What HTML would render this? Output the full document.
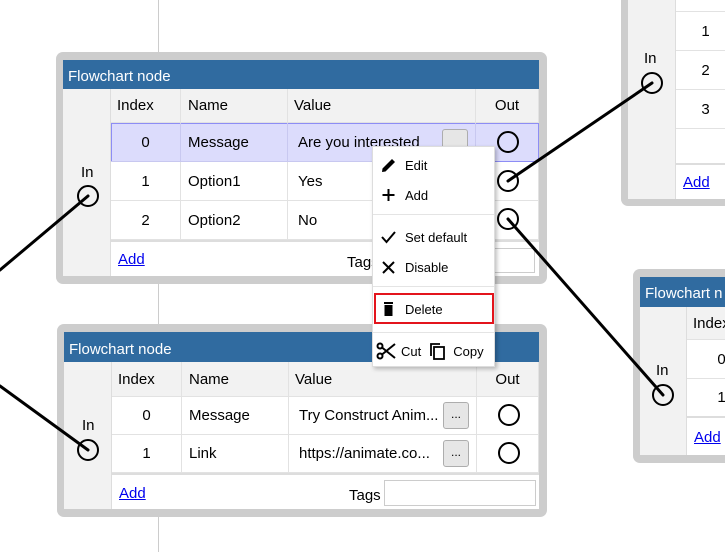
<!DOCTYPE html>
<html><head><meta charset="utf-8"><style>
*{box-sizing:border-box;margin:0;padding:0}
body{width:725px;height:552px;overflow:hidden;background:#fff;position:relative;font-family:"Liberation Sans",sans-serif;font-size:15px;color:#000}
.a{position:absolute}
.frame{position:absolute;background:#cdcdcd;border-radius:7px}
.hdr{position:absolute;background:#306ba0;color:#fff;font-size:15px;line-height:30px;padding-left:5px;white-space:nowrap;overflow:hidden}
.incol{position:absolute;background:#f2f2f2;border-right:1px solid #ddd}
.cell{position:absolute;border-right:1px solid #e2e2e2;border-bottom:1px solid #e2e2e2;display:flex;align-items:center;padding-left:7px;white-space:nowrap;overflow:hidden}
.th{background:#f2f2f2}
.c{justify-content:center;padding-left:0}
.circ{position:absolute;width:22px;height:22px;border:2.5px solid #000;border-radius:50%;background:transparent}
.btn{position:absolute;width:26px;height:27px;border:1px solid #adadad;border-radius:3px;background:#e6e6e6;font-size:12px;text-align:center;line-height:22px}
a{color:#00e;text-decoration:underline}
.mi{position:absolute;left:0;display:flex;align-items:center;font-size:13px}
</style></head><body>
<div class="a" style="left:158px;top:0;width:1px;height:552px;background:#ccc"></div>

<div class="frame" style="left:621px;top:-10px;width:120px;height:216px"></div>
<div class="a" style="left:628px;top:-10px;width:100px;height:209px;background:#fff"></div>
<div class="incol" style="left:628px;top:-10px;width:48px;height:209px"></div>
<div class="a" style="left:644px;top:50px">In</div>
<div class="cell c" style="left:676px;top:-10px;width:60px;height:22px"></div>
<div class="cell c" style="left:676px;top:12px;width:60px;height:39px">1</div>
<div class="cell c" style="left:676px;top:51px;width:60px;height:39px">2</div>
<div class="cell c" style="left:676px;top:90px;width:60px;height:39px">3</div>
<div class="cell" style="left:676px;top:129px;width:60px;height:36px;border-bottom:2px solid #ddd"></div>
<div class="a" style="left:683px;top:174px"><a>Add</a></div>

<div class="frame" style="left:633px;top:269px;width:110px;height:194px"></div>
<div class="hdr" style="left:640px;top:277px;width:90px;height:30px;line-height:33px">Flowchart n</div>
<div class="a" style="left:640px;top:307px;width:90px;height:148px;background:#fff"></div>
<div class="incol" style="left:640px;top:307px;width:47px;height:148px"></div>
<div class="a" style="left:656px;top:362px">In</div>
<div class="cell th" style="left:687px;top:307px;width:50px;height:33px;padding-left:6px">Index</div>
<div class="cell c" style="left:687px;top:340px;width:70px;height:39px">0</div>
<div class="cell c" style="left:687px;top:379px;width:70px;height:38px">1</div>
<div class="a" style="left:687px;top:416px;width:50px;height:2px;background:#ddd"></div>
<div class="a" style="left:694px;top:429px"><a>Add</a></div>

<div class="frame" style="left:56px;top:52px;width:491px;height:232px"></div>
<div class="hdr" style="left:63px;top:60px;width:476px;height:29px;line-height:33px">Flowchart node</div>
<div class="a" style="left:63px;top:89px;width:476px;height:187px;background:#fff"></div>
<div class="incol" style="left:63px;top:89px;width:48px;height:187px"></div>
<div class="a" style="left:81px;top:164px">In</div>
<div class="cell th" style="left:111px;top:89px;width:70px;height:34px;padding-left:6px">Index</div>
<div class="cell th" style="left:181px;top:89px;width:107px;height:34px">Name</div>
<div class="cell th" style="left:288px;top:89px;width:188px;height:34px;padding-left:6px">Value</div>
<div class="cell th c" style="left:476px;top:89px;width:63px;height:34px">Out</div>
<div class="a" style="left:111px;top:123px;width:428px;height:39px;background:#dcdcfc;border:1px solid #8d8df5"></div>
<div class="cell c" style="left:111px;top:123px;width:70px;height:39px;border-color:#c8c8f0">0</div>
<div class="cell" style="left:181px;top:123px;width:107px;height:39px;border-color:#c8c8f0">Message</div>
<div class="cell" style="left:288px;top:123px;width:188px;height:39px;padding-left:10px;border-color:#c8c8f0">Are you interested</div>
<div class="btn" style="left:442px;top:129px"></div>
<div class="cell c" style="left:111px;top:162px;width:70px;height:39px">1</div>
<div class="cell" style="left:181px;top:162px;width:107px;height:39px">Option1</div>
<div class="cell" style="left:288px;top:162px;width:188px;height:39px;padding-left:10px">Yes</div>
<div class="cell" style="left:476px;top:162px;width:63px;height:39px"></div>
<div class="cell c" style="left:111px;top:201px;width:70px;height:39px">2</div>
<div class="cell" style="left:181px;top:201px;width:107px;height:39px">Option2</div>
<div class="cell" style="left:288px;top:201px;width:188px;height:39px;padding-left:10px">No</div>
<div class="cell" style="left:476px;top:201px;width:63px;height:39px"></div>
<div class="a" style="left:111px;top:240px;width:428px;height:2px;background:#ddd"></div>
<div class="a" style="left:118px;top:251px"><a>Add</a></div>
<div class="a" style="left:347px;top:254px">Tags</div>
<div class="a" style="left:383px;top:248px;width:152px;height:25px;border:1px solid #ccc"></div>
<div class="circ" style="left:497px;top:131px"></div>
<div class="circ" style="left:497px;top:170px"></div>
<div class="circ" style="left:497px;top:208px"></div>
<div class="circ" style="left:77px;top:185px"></div>

<div class="frame" style="left:57px;top:324px;width:490px;height:193px"></div>
<div class="hdr" style="left:64px;top:332px;width:475px;height:30px;line-height:35px">Flowchart node</div>
<div class="a" style="left:64px;top:362px;width:475px;height:147px;background:#fff"></div>
<div class="incol" style="left:64px;top:362px;width:48px;height:147px"></div>
<div class="a" style="left:82px;top:417px">In</div>
<div class="cell th" style="left:112px;top:362px;width:70px;height:35px;padding-left:6px">Index</div>
<div class="cell th" style="left:182px;top:362px;width:107px;height:35px">Name</div>
<div class="cell th" style="left:289px;top:362px;width:188px;height:35px;padding-left:6px">Value</div>
<div class="cell th c" style="left:477px;top:362px;width:62px;height:35px">Out</div>
<div class="cell c" style="left:112px;top:397px;width:70px;height:38px">0</div>
<div class="cell" style="left:182px;top:397px;width:107px;height:38px">Message</div>
<div class="cell" style="left:289px;top:397px;width:188px;height:38px;padding-left:10px">Try Construct Anim...</div>
<div class="cell" style="left:477px;top:397px;width:62px;height:38px"></div>
<div class="cell c" style="left:112px;top:435px;width:70px;height:38px">1</div>
<div class="cell" style="left:182px;top:435px;width:107px;height:38px">Link</div>
<div class="cell" style="left:289px;top:435px;width:188px;height:38px;padding-left:10px">https://animate.co...</div>
<div class="cell" style="left:477px;top:435px;width:62px;height:38px"></div>
<div class="btn" style="left:443px;top:402px">...</div>
<div class="btn" style="left:443px;top:440px">...</div>
<div class="a" style="left:112px;top:473px;width:427px;height:2px;background:#ddd"></div>
<div class="a" style="left:119px;top:485px"><a>Add</a></div>
<div class="a" style="left:349px;top:487px">Tags</div>
<div class="a" style="left:384px;top:480px;width:152px;height:26px;border:1px solid #ccc"></div>
<div class="circ" style="left:498px;top:404px"></div>
<div class="circ" style="left:498px;top:442px"></div>
<div class="circ" style="left:77px;top:439px"></div>
<div class="circ" style="left:641px;top:72px"></div>
<div class="circ" style="left:652px;top:384px"></div>

<svg class="a" style="left:0;top:0" width="725" height="552"><g stroke="#000" stroke-width="3" stroke-linecap="round">
<line x1="0" y1="270" x2="88" y2="196"/>
<line x1="0" y1="386" x2="88" y2="450"/>
<line x1="508" y1="181" x2="652" y2="83"/>
<line x1="508" y1="219" x2="663" y2="395"/>
</g></svg>

<div class="a" style="left:372px;top:146px;width:123px;height:221px;background:#fff;border:1px solid #ddd;box-shadow:2px 2px 4px rgba(0,0,0,.25)">
  <div class="mi" style="top:8px"><svg width="32" height="20" viewBox="0 0 32 20"><path d="M9 17 L9.5 13.5 L19 4 L22 7 L12.5 16.5 Z" fill="#000"/></svg>Edit</div>
  <div class="mi" style="top:38px"><svg width="32" height="20" viewBox="0 0 32 20"><path d="M15.5 4 V16 M9.5 10 H21.5" stroke="#000" stroke-width="2"/></svg>Add</div>
  <div class="a" style="left:0;top:67px;width:121px;height:1px;background:#e4e4e4"></div>
  <div class="mi" style="top:80px"><svg width="32" height="20" viewBox="0 0 32 20"><path d="M9 10 L13.5 15 L22 5" stroke="#000" stroke-width="2" fill="none"/></svg>Set default</div>
  <div class="mi" style="top:110px"><svg width="32" height="20" viewBox="0 0 32 20"><path d="M10 5 L21 16 M21 5 L10 16" stroke="#000" stroke-width="2"/></svg>Disable</div>
  <div class="a" style="left:0;top:139px;width:121px;height:1px;background:#e4e4e4"></div>
  <div class="a" style="left:1px;top:146px;width:120px;height:31px;border:2px solid #e3141c"></div>
  <div class="mi" style="top:152px"><svg width="32" height="20" viewBox="0 0 32 20"><path d="M11 3 H20 V5 H11 Z M11.5 6 H19.5 V17 H11.5 Z" fill="#000"/></svg>Delete</div>
  <div class="a" style="left:0;top:185px;width:121px;height:1px;background:#e4e4e4"></div>
  <div class="mi" style="top:194px"><svg width="28" height="20" viewBox="0 0 28 20"><g stroke="#000" stroke-width="2" fill="none"><circle cx="7" cy="5" r="2.5"/><circle cx="7" cy="15" r="2.5"/><path d="M9 6.5 L22 17 M9 13.5 L22 3"/></g></svg>Cut<svg width="28" height="20" viewBox="0 0 28 20" style="margin-left:4px"><g stroke="#000" stroke-width="1.8" fill="none"><path d="M6 15 V3 H15"/><rect x="9" y="6" width="10" height="12"/></g></svg>Copy</div>
</div>
</body></html>
